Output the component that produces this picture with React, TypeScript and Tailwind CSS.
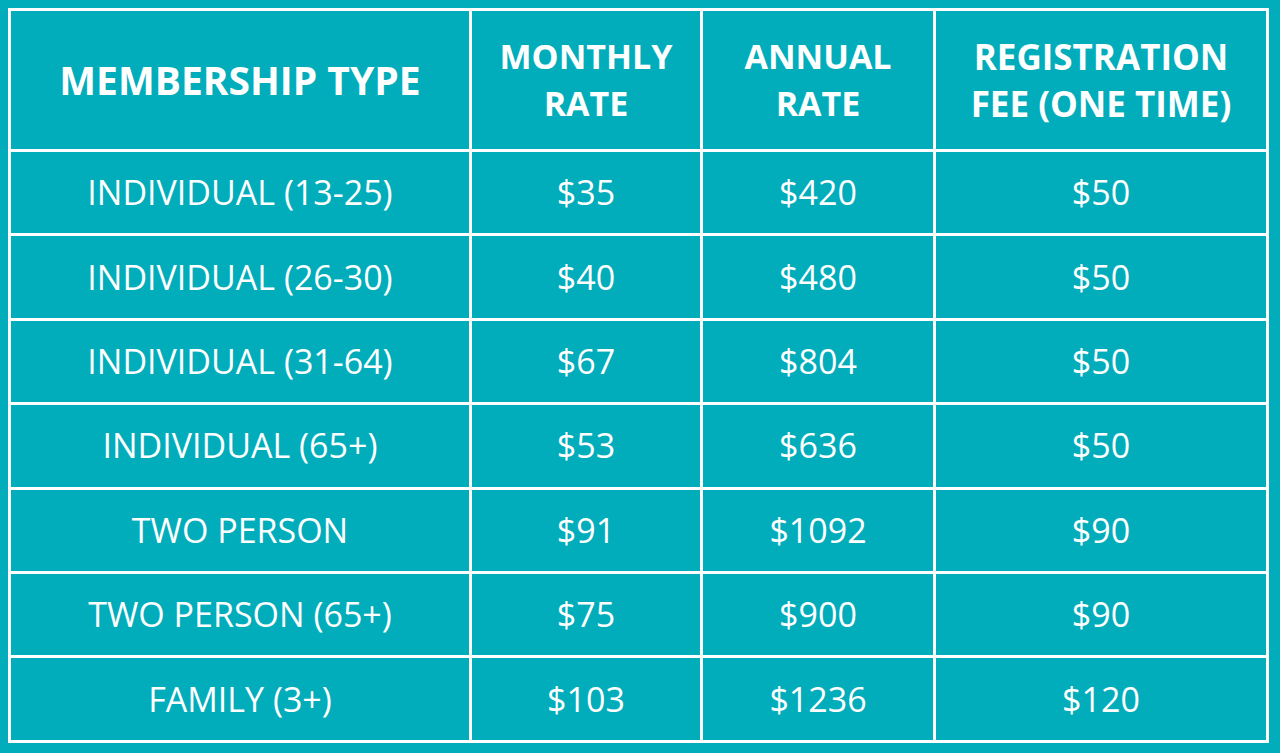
import React from 'react';

const rows = [
  ['INDIVIDUAL (13-25)', '$35', '$420', '$50'],
  ['INDIVIDUAL (26-30)', '$40', '$480', '$50'],
  ['INDIVIDUAL (31-64)', '$67', '$804', '$50'],
  ['INDIVIDUAL (65+)', '$53', '$636', '$50'],
  ['TWO PERSON', '$91', '$1092', '$90'],
  ['TWO PERSON (65+)', '$75', '$900', '$90'],
  ['FAMILY (3+)', '$103', '$1236', '$120'],
];

const App = () => {
  return (
    <div className="w-[1280px] h-[753px] bg-[#01adbb] pt-[8px] pl-[8px] font-['Open_Sans',sans-serif] text-white">
      <div className="grid w-fit grid-cols-[458px_228px_230px_330px] grid-rows-[138px_repeat(7,81.4px)] gap-[3px] bg-white p-[3px]">
        {/* Header */}
        <div className="flex items-center justify-center bg-[#01adbb] text-[39px] font-bold text-center">
          MEMBERSHIP TYPE
        </div>
        <div className="flex items-center justify-center bg-[#01adbb] text-[34px] font-bold leading-[47px] text-center">
          MONTHLY<br />RATE
        </div>
        <div className="flex items-center justify-center bg-[#01adbb] text-[34px] font-bold leading-[47px] text-center">
          ANNUAL<br />RATE
        </div>
        <div className="flex items-center justify-center bg-[#01adbb] text-[35px] font-bold leading-[47px] text-center">
          REGISTRATION<br />FEE (ONE TIME)
        </div>

        {/* Rows */}
        {rows.map((row, i) =>
          row.map((cell, j) => (
            <div
              key={i + '-' + j}
              className="flex items-center justify-center bg-[#01adbb] text-[34px] font-normal"
            >
              {cell}
            </div>
          ))
        )}
      </div>
    </div>
  );
};

export default App;
